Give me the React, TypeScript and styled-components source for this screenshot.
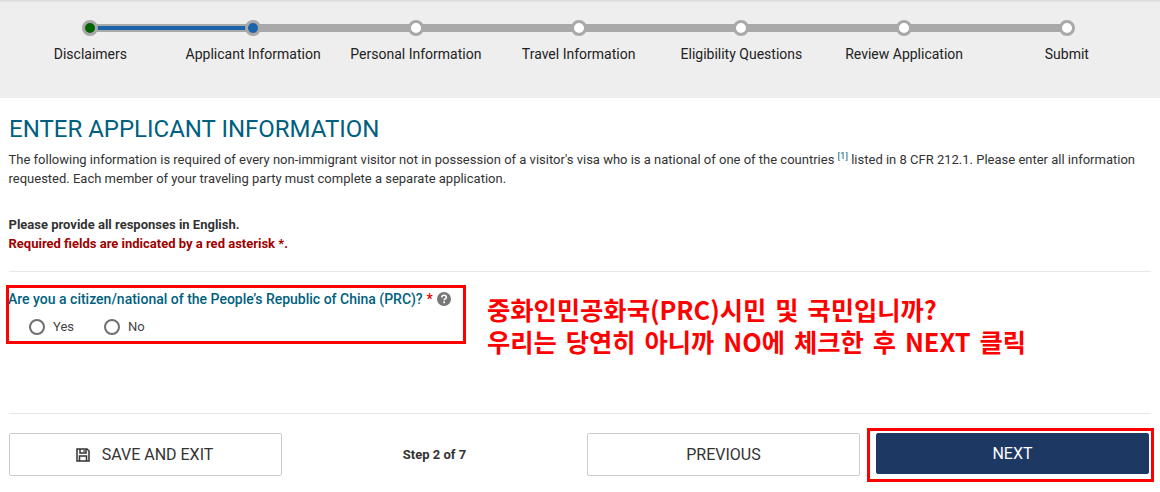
import React from 'react'
import styled, { createGlobalStyle } from 'styled-components'

const GlobalStyle = createGlobalStyle`
	html, body {
		margin: 0;
		padding: 0;
		background: #fff;
		font-family: Roboto, "Liberation Sans", sans-serif;
		color: #333;
	}
`

const Page = styled.div`
	position: relative;
	width: 1160px;
	height: 492px;
	overflow: hidden;
	background: #fff;
`

const Header = styled.header`
	height: 98px;
	box-sizing: border-box;
	padding: 20px 9px 0;
	background: linear-gradient(#d8d8d8, #eaeaea 2px, #eee 4px);
`

const Steps = styled.ol`
	display: grid;
	grid-template-columns: repeat(7, 162.75px);
	margin: 0;
	padding: 0;
	list-style: none;
`

const Step = styled.li<{ $line?: 'done' | 'todo' }>`
	position: relative;
	display: flex;
	flex-direction: column;
	align-items: center;
	gap: 9px;

	&::before {
		content: '';
		display: ${p => (p.$line ? 'block' : 'none')};
		position: absolute;
		left: 50%;
		width: 100%;
		top: 4px;
		height: 8px;
		background: #a9a9a9;
	}

	&::after {
		content: '';
		display: ${p => (p.$line === 'done' ? 'block' : 'none')};
		position: absolute;
		left: 50%;
		width: 100%;
		top: 6px;
		height: 4px;
		background: #1b63ab;
	}
`

const Dot = styled.span<{ $fill: string }>`
	position: relative;
	z-index: 1;
	width: 10px;
	height: 10px;
	border: 3px solid #a9a9a9;
	border-radius: 50%;
	background: ${p => p.$fill};
`

const StepLabel = styled.span`
	font-size: 14px;
	line-height: 18px;
	color: #222;
	white-space: nowrap;
`

const Main = styled.main`
	padding: 0 9px;
`

const Title = styled.h1`
	margin: 16px 0 0;
	font-size: 24px;
	line-height: 30px;
	font-weight: 400;
	color: #005f7f;
`

const Intro = styled.p`
	margin: 6px 0 0 -0.5px;
	font-size: 13px;
	line-height: 19px;
	color: #333;

	sup {
		font-size: 9.5px;
		line-height: 0;
		color: #005f7f;
	}
`

const Notes = styled.div`
	margin: 27px 0 0 -0.5px;
	font-size: 13px;
	line-height: 19px;
	font-weight: 700;
`

const Required = styled.div`
	color: #a00000;
`

const Question = styled.section`
	margin-top: 18px;
	height: 142px;
	box-sizing: border-box;
	padding-top: 18px;
	border-top: 1px solid #e8e8e8;
`

const Prompt = styled.div`
	display: flex;
	align-items: center;
	font-size: 14px;
	line-height: 18px;
	font-weight: 500;
	color: #005f7f;
	margin-left: -1px;
`

const Asterisk = styled.span`
	margin-left: 4px;
	color: #e00000;
`

const Help = styled.svg`
	margin-left: 4px;
	width: 14px;
	height: 14px;
`

const Options = styled.div`
	display: flex;
	gap: 30px;
	margin: 10px 0 0 20px;
`

const Option = styled.label`
	display: flex;
	align-items: center;
	gap: 8px;
	font-size: 13px;
	line-height: 18px;
	color: #444;
`

const Radio = styled.span`
	width: 16px;
	height: 16px;
	box-sizing: border-box;
	border: 2px solid #6f6f6f;
	border-radius: 50%;
`

const Footer = styled.footer`
	display: grid;
	grid-template-columns: 273px 305px 273px 289px;
	align-items: center;
	padding-top: 19px;
	border-top: 1px solid #e8e8e8;
`

const Button = styled.button`
	display: flex;
	align-items: center;
	justify-content: center;
	height: 43px;
	padding: 0;
	border: 1px solid #ccc;
	border-radius: 2px;
	background: #fff;
	color: #333;
	font-family: inherit;
	font-size: 16px;
`

const SaveButton = styled(Button)`
	gap: 12px;
	padding-right: 2px;
`

const NextButton = styled(Button)`
	height: 41px;
	margin-left: 16px;
	align-self: start;
	border-color: #1e3864;
	background: #1e3864;
	color: #fff;
`

const StepCount = styled.div`
	text-align: center;
	font-size: 13px;
	font-weight: 700;
	color: #333;
`

const Highlight = styled.div<{ $left: number; $top: number; $w: number; $h: number }>`
	position: absolute;
	left: ${p => p.$left}px;
	top: ${p => p.$top}px;
	width: ${p => p.$w}px;
	height: ${p => p.$h}px;
	box-sizing: border-box;
	border: 3px solid #f00;
	pointer-events: none;
`

const Annotation = styled.div`
	position: absolute;
	left: 487px;
	top: 293px;
	font-family: "Noto Sans CJK KR", sans-serif;
	font-size: 25.3px;
	line-height: 32px;
	font-weight: 700;
	word-spacing: 3.2px;
	color: #f00;
	white-space: nowrap;
`

const steps = [
	'Disclaimers',
	'Applicant Information',
	'Personal Information',
	'Travel Information',
	'Eligibility Questions',
	'Review Application',
	'Submit',
]

const dotFill = (i: number) => (i === 0 ? '#006400' : i === 1 ? '#1b63ab' : '#fff')

const SaveIcon = () => (
	<svg width="14" height="14" viewBox="0 0 14 14" fill="none" stroke="#333" strokeWidth="1.5">
		<path d="M1 1h10l2 2v10H1z" />
		<path d="M4 1v4h6V1M3.5 13V8h7v5" />
		<path d="M8 2.2v1.6" />
	</svg>
)

export default function App() {
	return (
		<Page>
			<GlobalStyle />
			<Header>
				<Steps>
					{steps.map((s, i) => (
						<Step key={s} $line={i === 0 ? 'done' : i < 6 ? 'todo' : undefined}>
							<Dot $fill={dotFill(i)} />
							<StepLabel>{s}</StepLabel>
						</Step>
					))}
				</Steps>
			</Header>
			<Main>
				<Title>ENTER APPLICANT INFORMATION</Title>
				<Intro>
					The following information is required of every non-immigrant visitor not in possession of a visitor's visa who is a national of one of the countries <sup>[1]</sup> listed in 8 CFR 212.1. Please enter all information requested. Each member of your traveling party must complete a separate application.
				</Intro>
				<Notes>
					Please provide all responses in English.
					<Required>Required fields are indicated by a red asterisk *.</Required>
				</Notes>
				<Question>
					<Prompt>
						Are you a citizen/national of the People’s Republic of China (PRC)?
						<Asterisk>*</Asterisk>
						<Help viewBox="0 0 14 14">
							<circle cx="7" cy="7" r="7" fill="#777" />
							<path d="M4.8 5.4c0-1.3 1-2.1 2.3-2.1s2.2.8 2.2 1.9c0 1.7-2.2 1.6-2.2 3.1" fill="none" stroke="#fff" strokeWidth="1.6" />
							<rect x="6.2" y="9.4" width="1.8" height="1.8" fill="#fff" />
						</Help>
					</Prompt>
					<Options>
						<Option><Radio />Yes</Option>
						<Option><Radio />No</Option>
					</Options>
				</Question>
				<Footer>
					<SaveButton><SaveIcon />SAVE AND EXIT</SaveButton>
					<StepCount>Step 2 of 7</StepCount>
					<Button>PREVIOUS</Button>
					<NextButton>NEXT</NextButton>
				</Footer>
			</Main>
			<Highlight $left={6} $top={285} $w={460} $h={59} />
			<Highlight $left={867} $top={428} $w={287} $h={54} />
			<Annotation>
				중화인민공화국(PRC)시민 및 국민입니까?
				<br />
				우리는 당연히 아니까 NO에 체크한 후 NEXT 클릭
			</Annotation>
		</Page>
	)
}
